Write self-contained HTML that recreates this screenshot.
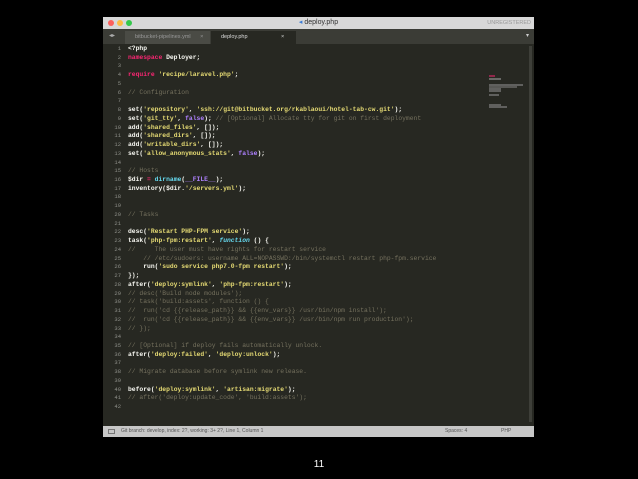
<!DOCTYPE html>
<html><head><meta charset="utf-8"><style>
body{margin:0;background:#000;width:638px;height:479px;position:relative;overflow:hidden;font-family:"Liberation Sans",sans-serif}
.win{position:absolute;left:103px;top:17px;width:431px;height:420px;background:#272822}
.title{position:absolute;left:0;top:0;width:431px;height:12px;background:#d8d8d8;font-size:7px;color:#333;text-align:center;line-height:12px}
.dot{position:absolute;top:3px;width:6px;height:6px;border-radius:50%}
.tabs{position:absolute;left:0;top:12px;width:431px;height:15px;background:#3b3c36}
.tab{position:absolute;top:2px;height:13px;font-size:5.5px;line-height:13px;padding-left:10px;box-sizing:border-box}
.ed{position:absolute;left:0;top:27px;width:431px;height:382px;background:#272822}
pre{margin:0;position:absolute;left:25px;top:1px;font-family:"Liberation Mono",monospace;font-size:6.35px;line-height:8.73px;color:#f8f8f2;font-weight:bold}
.ln{position:absolute;left:4px;top:1px;width:14px;text-align:right;font-family:"Liberation Mono",monospace;font-size:5.5px;line-height:8.73px;color:#8f908a}
.k{color:#f92672}.s{color:#e6db74}.c{color:#75715e;font-weight:normal}.f{color:#66d9ef;font-style:italic}.b{color:#ae81ff}.n{color:#66d9ef}
.status{position:absolute;left:0;top:409px;width:431px;height:11px;background:#c7c7c7;font-size:5px;color:#555;line-height:11px}
.mini{position:absolute;left:384px;top:30px;width:40px;height:40px}
</style></head><body>
<div class="win">
<div class="title"><span class="dot" style="left:5px;background:#fc605c"></span><span class="dot" style="left:14px;background:#fdbc40"></span><span class="dot" style="left:23px;background:#34c84a"></span><span style="color:#3a7bd5">◂</span> deploy.php<span style="position:absolute;right:3px;color:#999;font-size:5.5px">UNREGISTERED</span></div>
<div class="tabs"><span style="position:absolute;left:6px;top:3px;color:#aaa;font-size:6px">◂▸</span>
<div class="tab" style="left:22px;width:85px;background:#4a4b45;color:#999">bitbucket-pipelines.yml <span style="margin-left:8px">×</span></div>
<div class="tab" style="left:108px;width:85px;background:#272822;color:#ddd">deploy.php<span style="position:absolute;left:70px">×</span></div>
<span style="position:absolute;right:5px;top:3px;color:#ccc;font-size:6px">▾</span></div>
<div class="ed">
<div class="ln">1<br>2<br>3<br>4<br>5<br>6<br>7<br>8<br>9<br>10<br>11<br>12<br>13<br>14<br>15<br>16<br>17<br>18<br>19<br>20<br>21<br>22<br>23<br>24<br>25<br>26<br>27<br>28<br>29<br>30<br>31<br>32<br>33<br>34<br>35<br>36<br>37<br>38<br>39<br>40<br>41<br>42</div>
<pre>&lt;?php
<span class="k">namespace</span> Deployer;

<span class="k">require</span> <span class="s">'recipe/laravel.php'</span>;

<span class="c">// Configuration</span>

set(<span class="s">'repository'</span>, <span class="s">'ssh://git@bitbucket.org/rkablaoui/hotel-tab-cw.git'</span>);
set(<span class="s">'git_tty'</span>, <span class="b">false</span>); <span class="c">// [Optional] Allocate tty for git on first deployment</span>
add(<span class="s">'shared_files'</span>, []);
add(<span class="s">'shared_dirs'</span>, []);
add(<span class="s">'writable_dirs'</span>, []);
set(<span class="s">'allow_anonymous_stats'</span>, <span class="b">false</span>);

<span class="c">// Hosts</span>
$dir <span class="k">=</span> <span class="n">dirname</span>(<span class="b">__FILE__</span>);
inventory($dir.<span class="s">'/servers.yml'</span>);


<span class="c">// Tasks</span>

desc(<span class="s">'Restart PHP-FPM service'</span>);
task(<span class="s">'php-fpm:restart'</span>, <span class="f">function</span> () {
<span class="c">//     The user must have rights for restart service</span>
    <span class="c">// /etc/sudoers: username ALL=NOPASSWD:/bin/systemctl restart php-fpm.service</span>
    run(<span class="s">'sudo service php7.0-fpm restart'</span>);
});
after(<span class="s">'deploy:symlink'</span>, <span class="s">'php-fpm:restart'</span>);
<span class="c">// desc('Build node modules');</span>
<span class="c">// task('build:assets', function () {</span>
<span class="c">//  run('cd {{release_path}} &amp;&amp; {{env_vars}} /usr/bin/npm install');</span>
<span class="c">//  run('cd {{release_path}} &amp;&amp; {{env_vars}} /usr/bin/npm run production');</span>
<span class="c">// });</span>

<span class="c">// [Optional] if deploy fails automatically unlock.</span>
after(<span class="s">'deploy:failed'</span>, <span class="s">'deploy:unlock'</span>);

<span class="c">// Migrate database before symlink new release.</span>

before(<span class="s">'deploy:symlink'</span>, <span class="s">'artisan:migrate'</span>);
<span class="c">// after('deploy:update_code', 'build:assets');</span>
</pre>
<svg class="mini" viewBox="0 0 40 40"><g stroke-width="1"><line x1="2" y1="2" x2="8" y2="2" stroke="#f92672"/><line x1="2" y1="5" x2="14" y2="5" stroke="#aaa"/><line x1="2" y1="11" x2="36" y2="11" stroke="#999"/><line x1="2" y1="13" x2="30" y2="13" stroke="#888"/><line x1="2" y1="15" x2="14" y2="15" stroke="#999"/><line x1="2" y1="17" x2="14" y2="17" stroke="#999"/><line x1="2" y1="21" x2="12" y2="21" stroke="#999"/><line x1="2" y1="31" x2="14" y2="31" stroke="#999"/><line x1="2" y1="33" x2="20" y2="33" stroke="#999"/></g></svg>
<div style="position:absolute;right:2px;top:2px;width:3px;height:376px;background:#3e3f39"></div>
</div>
<div class="status"><span style="position:absolute;left:5px;top:3px;width:7px;height:5px;border:1px solid #777;box-sizing:border-box"></span><span style="position:absolute;left:18px">Git branch: develop, index: 2?, working: 3+ 2?, Line 1, Column 1</span><span style="position:absolute;left:342px">Spaces: 4</span><span style="position:absolute;left:398px">PHP</span></div>
</div>
<div style="position:absolute;left:0;width:638px;top:459px;text-align:center;color:#fff;font-size:10px">11</div>
</body></html>
